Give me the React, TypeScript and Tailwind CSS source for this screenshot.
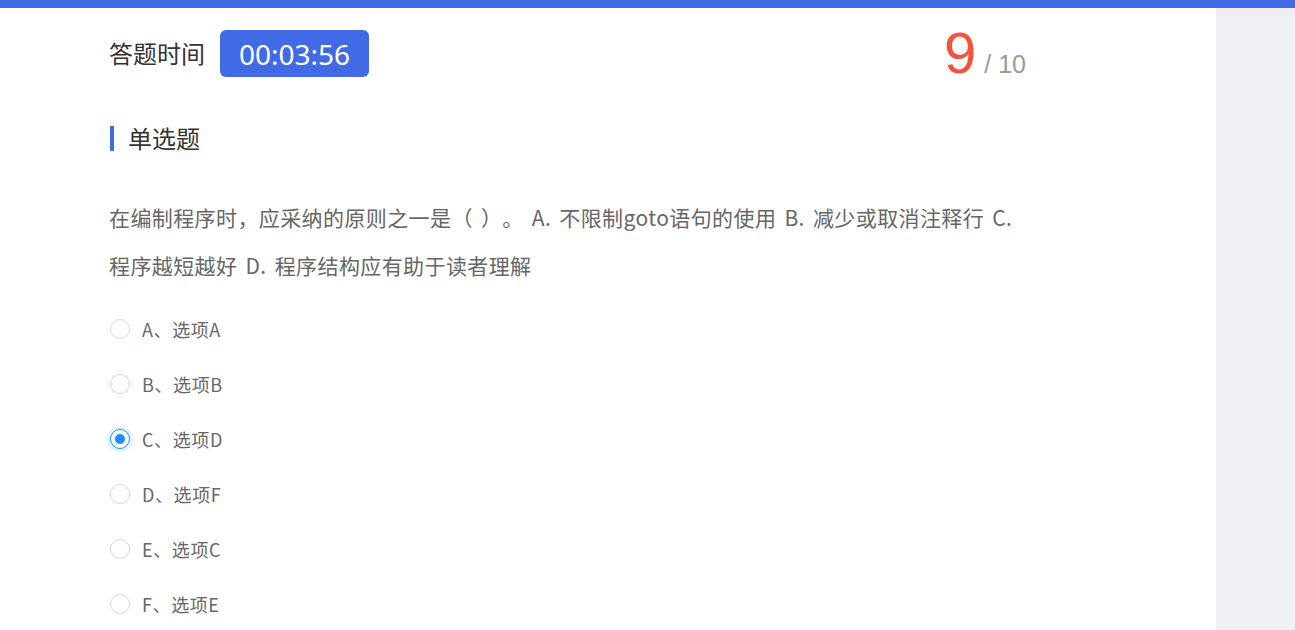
import React, { useState } from 'react';

const font = { fontFamily: '"Noto Sans", "Noto Sans CJK SC", sans-serif' };
const cjk = { fontFamily: '"Noto Sans CJK SC", "Noto Sans", sans-serif' };

const options = [
  { key: 'A', label: 'A、选项A' },
  { key: 'B', label: 'B、选项B' },
  { key: 'C', label: 'C、选项D' },
  { key: 'D', label: 'D、选项F' },
  { key: 'E', label: 'E、选项C' },
  { key: 'F', label: 'F、选项E' },
];

export default function App() {
  const [picked, setPicked] = useState('C');

  return (
    <div className="h-[630px] overflow-hidden bg-white flex flex-col" style={font}>
      <div className="h-2 bg-[#416be6] shrink-0" />
      <div className="flex flex-1">
        <main className="flex-1 bg-white">
          <div className="ml-[109px] w-[920px]">
            {/* header */}
            <div className="flex items-center justify-between pt-[16px]">
              <div className="flex items-center">
                <span className="text-[24px] text-[#333]">答题时间</span>
                <div className="ml-[15px] w-[149px] h-[47px] rounded-md bg-[#416be6] flex items-center justify-center text-white text-[28px]">
                  00:03:56
                </div>
              </div>
              <div className="flex items-baseline pr-[3px]" style={{ fontFamily: '"Liberation Sans", Arial, sans-serif' }}>
                <span className="text-[58px] leading-none text-[#f5523c]">9</span>
                <span className="ml-2 text-[25px] text-[#999]">/ 10</span>
              </div>
            </div>

            {/* section title */}
            <div className="mt-[37px] flex items-center">
              <div className="ml-px w-1 h-[25px] bg-[#416be6]" />
              <span className="ml-[14px] text-[24px] text-[#333]">单选题</span>
            </div>

            {/* question */}
            <p
              className="mt-[36px] text-[21px] tracking-[0.4px] [word-spacing:3px] [text-spacing-trim:space-all] leading-[48px] text-[#666]"
              style={cjk}
            >
              在编制程序时，应采纳的原则之一是（ ）。 A. 不限制goto语句的使用 B. 减少或取消注释行 C. 程序越短越好 D. 程序结构应有助于读者理解
            </p>

            {/* options */}
            <div className="mt-[13px] flex flex-col">
              {options.map((o) => {
                const on = picked === o.key;
                return (
                  <label key={o.key} className="h-[55px] flex items-center cursor-pointer" onClick={() => setPicked(o.key)}>
                    <span
                      className={
                        on
                          ? 'ml-px w-5 h-5 rounded-full border border-[#1890ff] flex items-center justify-center shadow-[0_0_0_3px_rgba(24,144,255,0.12)]'
                          : 'ml-px w-5 h-5 rounded-full border border-[#d9d9d9] bg-white'
                      }
                    >
                      {on && <span className="w-[10px] h-[10px] rounded-full bg-[#1890ff]" />}
                    </span>
                    <span className="ml-3 text-[18px] tracking-[0.6px] text-[#666]" style={cjk}>{o.label}</span>
                  </label>
                );
              })}
            </div>
          </div>
        </main>
        <aside className="w-[79px] bg-[#eff0f4]" />
      </div>
    </div>
  );
}
